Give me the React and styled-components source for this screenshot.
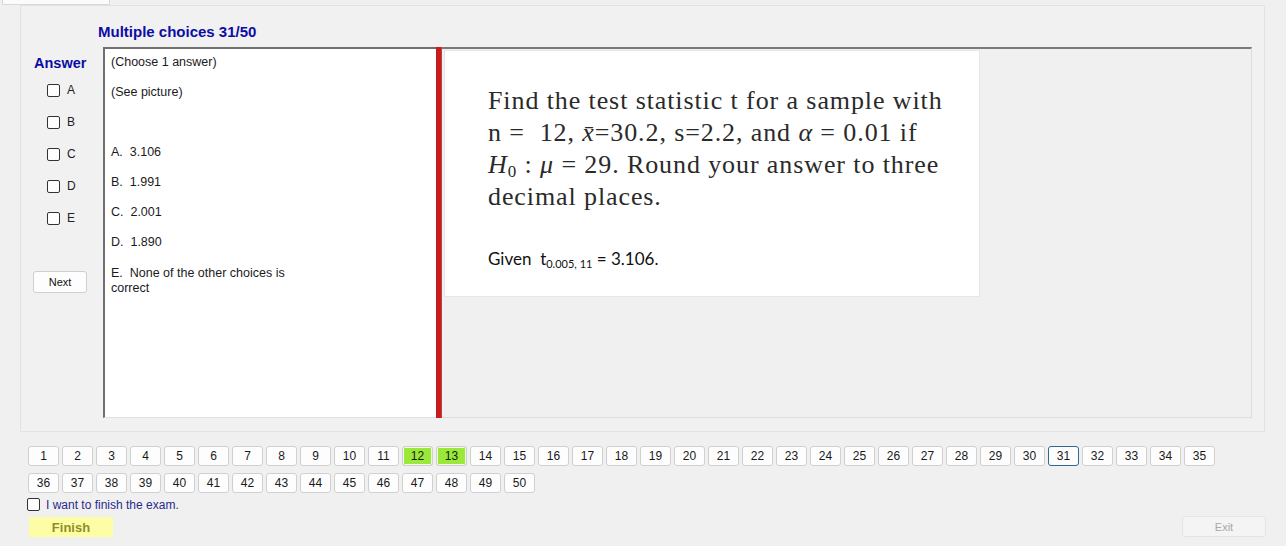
import React from 'react';
import styled, { createGlobalStyle } from 'styled-components';

const GlobalStyle = createGlobalStyle`
  html, body {
    margin: 0;
    padding: 0;
    background: #f0f0f0;
  }
  body {
    font-family: "Liberation Sans", Arial, sans-serif;
    font-size: 12px;
    color: #1b1b1b;
  }
`;

const Window = styled.div`
  width: 1286px;
  height: 546px;
  display: flex;
  flex-direction: column;
  background: #f0f0f0;
  overflow: hidden;
`;

const TabStrip = styled.div`
  height: 5px;
  display: flex;
  padding-left: 2px;
`;

const Tab = styled.div`
  width: 108px;
  height: 5px;
  background: #fbfbfb;
  border: 1px solid #d9d9d9;
  border-top: none;
  box-sizing: border-box;
`;

const TabPage = styled.div`
  margin-left: 20px;
  width: 1245px;
  height: 427px;
  box-sizing: border-box;
  border: 1px solid #e2e2e2;
  background: #f1f1f1;
  display: flex;
  flex-direction: column;
  padding-right: 12px;
`;

const Title = styled.div`
  height: 41px;
  box-sizing: border-box;
  padding: 17px 0 0 77px;
  font-weight: bold;
  font-size: 15px;
  color: #0c0ca6;
`;

const Body = styled.div`
  display: flex;
  height: 371px;
`;

const AnswerColumn = styled.div`
  width: 82px;
  display: flex;
  flex-direction: column;
  align-items: flex-start;
`;

const AnswerLabel = styled.div`
  margin: 8px 0 0 13px;
  font-weight: bold;
  font-size: 14.5px;
  color: #0c0ca6;
  line-height: 16px;
`;

const ChoiceRow = styled.label`
  display: flex;
  align-items: center;
  gap: 7px;
  height: 32px;
  padding-left: 26px;
  font-size: 12px;
  color: #222;
  &:first-of-type {
    margin-top: 3px;
  }
`;

const Box = styled.span`
  width: 11px;
  height: 11px;
  border: 1px solid #333;
  border-radius: 2px;
  background: #fff;
  display: inline-block;
`;

const NextButton = styled.button`
  margin: 37px 0 0 12px;
  width: 54px;
  height: 22px;
  font-family: "Liberation Sans", Arial, sans-serif;
  font-size: 11px;
  color: #111;
  background: #fdfdfd;
  border: 1px solid #cfcfcf;
  border-radius: 3px;
  padding: 0;
`;

const TextBox = styled.div`
  width: 333px;
  box-sizing: border-box;
  background: #fff;
  border-left: 2px solid #6f6f6f;
  border-top: 2px solid #6f6f6f;
  border-bottom: 1px solid #e0e0e0;
  padding: 6px 0 0 6px;
`;

const Line = styled.div`
  max-width: 200px;
  font-size: 12.5px;
  line-height: 15px;
  margin-bottom: ${({ $gap }) => $gap}px;
  white-space: pre-wrap;
  min-height: 15px;
`;

const Splitter = styled.div`
  width: 6px;
  box-sizing: border-box;
  background: #d81616;
  border-left: 1px solid #8a3030;
  border-right: 1px solid #a05050;
`;

const PicturePane = styled.div`
  flex: 1;
  border-top: 2px solid #7a7a7a;
  border-right: 1px solid #dedede;
  border-bottom: 1px solid #dedede;
  padding: 1px 0 0 2px;
  background: #f0f0f0;
`;

const Picture = styled.div`
  width: 536px;
  height: 247px;
  box-sizing: border-box;
  background: #fff;
  border: 1px solid #e6e6e6;
  padding: 34px 0 0 43px;
`;

const Latex = styled.div`
  font-family: "Liberation Serif", "DejaVu Serif", serif;
  font-size: 26px;
  line-height: 32px;
  color: #2a2a2a;
  letter-spacing: 0.9px;
  white-space: nowrap;
  sub {
    font-size: 17px;
    line-height: 0;
    vertical-align: -4px;
  }
`;

const Given = styled.div`
  margin-top: 34px;
  font-family: Lato, "Open Sans", sans-serif;
  font-size: 17px;
  line-height: 24px;
  color: #111;
  sub {
    font-size: 11px;
    line-height: 0;
    vertical-align: -3px;
  }
`;

const Nav = styled.div`
  margin: 14px 0 0 28px;
  width: 1200px;
  display: flex;
  flex-wrap: wrap;
  column-gap: 3px;
  row-gap: 7px;
`;

const NavButton = styled.button`
  width: 31px;
  height: 20px;
  box-sizing: border-box;
  padding: 0;
  font-family: "Liberation Sans", Arial, sans-serif;
  font-size: 12px;
  color: #1a1a1a;
  border: 1px solid ${({ $current }) => ($current ? '#2d6a92' : '#d0d0d0')};
  border-radius: 3px;
  background: ${({ $done }) => ($done ? '#9ae938' : '#fdfdfd')};
  box-shadow: ${({ $done }) => ($done ? 'inset 0 0 0 1px #f4fbe9' : 'none')};
`;

const FinishCheck = styled.label`
  display: flex;
  align-items: center;
  gap: 6px;
  margin: 4px 0 0 27px;
  height: 15px;
  font-size: 12px;
  color: #2a2a8e;
`;

const BottomRow = styled.div`
  display: flex;
  justify-content: space-between;
  align-items: flex-start;
  margin: 5px 20px 0 29px;
`;

const FinishButton = styled.button`
  width: 84px;
  height: 20px;
  padding: 0;
  border: none;
  background: #fdfda6;
  font-family: "Liberation Sans", Arial, sans-serif;
  font-weight: bold;
  font-size: 13px;
  color: #8f8f28;
`;

const ExitButton = styled.button`
  margin-top: -1px;
  width: 84px;
  height: 21px;
  padding: 0;
  border: 1px solid #e4e4e4;
  border-radius: 3px;
  background: #f4f4f4;
  font-family: "Liberation Sans", Arial, sans-serif;
  font-size: 11px;
  color: #a8a8a8;
`;

const choices = ['A', 'B', 'C', 'D', 'E'];

const lines = [
  ['(Choose 1 answer)', 15],
  ['(See picture)', 15],
  ['', 15],
  ['A.  3.106', 15],
  ['B.  1.991', 15],
  ['C.  2.001', 15],
  ['D.  1.890', 16],
  ['E.  None of the other choices is correct', 0],
];

const App = () => (
  <Window>
    <GlobalStyle />
    <TabStrip>
      <Tab />
    </TabStrip>
    <TabPage>
      <Title>Multiple choices 31/50</Title>
      <Body>
        <AnswerColumn>
          <AnswerLabel>Answer</AnswerLabel>
          {choices.map((c) => (
            <ChoiceRow key={c}>
              <Box />
              {c}
            </ChoiceRow>
          ))}
          <NextButton>Next</NextButton>
        </AnswerColumn>
        <TextBox>
          {lines.map(([text, gap], i) => (
            <Line key={i} $gap={gap}>{text}</Line>
          ))}
        </TextBox>
        <Splitter />
        <PicturePane>
          <Picture>
            <Latex>
              Find the test statistic t for a sample with
              <br />
              n&nbsp;=&nbsp; 12, <i>x̄</i>=30.2, s=2.2, and <i>α</i>&nbsp;=&nbsp;0.01 if
              <br />
              <i>H</i><sub>0</sub>&nbsp;: <i>μ</i>&nbsp;=&nbsp;29. Round your answer to three
              <br />
              decimal places.
            </Latex>
            <Given>
              Given&nbsp; t<sub>0.005, 11</sub> = 3.106.
            </Given>
          </Picture>
        </PicturePane>
      </Body>
    </TabPage>
    <Nav>
      {Array.from({ length: 50 }, (_, i) => i + 1).map((n) => (
        <NavButton key={n} $done={n === 12 || n === 13} $current={n === 31}>
          {n}
        </NavButton>
      ))}
    </Nav>
    <FinishCheck>
      <Box />
      I want to finish the exam.
    </FinishCheck>
    <BottomRow>
      <FinishButton>Finish</FinishButton>
      <ExitButton>Exit</ExitButton>
    </BottomRow>
  </Window>
);

export default App;
